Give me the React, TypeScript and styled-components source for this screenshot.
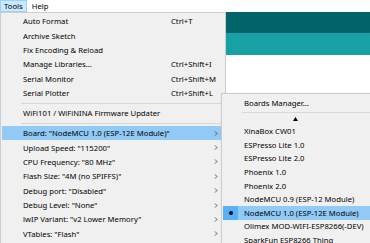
import styled, { createGlobalStyle } from "styled-components"

const GlobalStyle = createGlobalStyle`
    html, body {
        margin: 0;
        padding: 0;
        background: #ffffff;
        overflow: hidden;
    }
    body {
        font-family: "Noto Sans", "Open Sans", sans-serif;
        font-size: 7.7px;
        color: #000000;
    }
`

const Page = styled.div`
    position: relative;
    width: 370px;
    height: 243px;
    overflow: hidden;
    display: flex;
    flex-direction: column;
`

const MenuBar = styled.div`
    height: 12px;
    display: flex;
    align-items: stretch;
    background: #ffffff;
`

const BarItem = styled.div<{ $open?: boolean }>`
    display: flex;
    align-items: center;
    padding: 0 3px;
    margin-right: 1px;
    box-sizing: border-box;
    border: 1px solid ${(p) => (p.$open ? "#99d1ff" : "transparent")};
    background: ${(p) => (p.$open ? "#cce8ff" : "transparent")};
`

const Body = styled.div`
    flex: 1;
    display: flex;
`

const Menu = styled.div`
    width: 226px;
    box-sizing: border-box;
    background: #f0f0f0;
    border: 1px solid #cccccc;
    border-bottom: none;
    padding-top: 1px;
    display: flex;
    flex-direction: column;
`

const Row = styled.div<{ $active?: boolean }>`
    height: 14.4px;
    flex-shrink: 0;
    display: grid;
    grid-template-columns: 21px 148px 1fr 10px;
    align-items: center;
    margin: 0 1px;
    background: ${(p) => (p.$active ? "#91c9f7" : "transparent")};
    white-space: nowrap;
`

const Label = styled.span`
    grid-column: 2;
`

const Shortcut = styled.span`
    grid-column: 3;
`

const Arrow = styled.svg`
    grid-column: 4;
    width: 4px;
    height: 5px;
`

const Separator = styled.div<{ $h?: number }>`
    height: ${(p) => p.$h ?? 5.6}px;
    flex-shrink: 0;
    display: flex;
    align-items: center;
    padding: 0 2px 0 20px;

    &::after {
        content: "";
        flex: 1;
        height: 1px;
        background: #d7d7d7;
    }
`

const Editor = styled.div`
    flex: 1;
    display: flex;
    flex-direction: column;
`

const Toolbar = styled.div`
    height: 21px;
    background: #006468;
`

const Tabs = styled.div`
    height: 22px;
    background: #17a1a5;
`

const Sketch = styled.div`
    flex: 1;
    background: #ffffff;
`

const SubMenu = styled.div`
    position: absolute;
    left: 221px;
    top: 93px;
    width: 152px;
    height: 170px;
    box-sizing: border-box;
    background: #f0f0f0;
    border: 1px solid #cccccc;
    box-shadow: 2px 2px 3px rgba(0, 0, 0, 0.35);
    padding-top: 2px;
    display: flex;
    flex-direction: column;
`

const SubRow = styled.div<{ $active?: boolean; $h?: number }>`
    height: ${(p) => p.$h ?? 13.6}px;
    flex-shrink: 0;
    display: grid;
    grid-template-columns: 15px 6px 1fr;
    align-items: stretch;
    margin: 0 1px;
    white-space: nowrap;
    background: ${(p) => (p.$active ? "#91c9f7" : "transparent")};
`

const Check = styled.div<{ $active?: boolean }>`
    display: flex;
    align-items: center;
    justify-content: center;
    background: ${(p) => (p.$active ? "#56b0fa" : "transparent")};
`

const Dot = styled.span`
    width: 4px;
    height: 4px;
    border-radius: 50%;
    background: #000000;
`

const SubLabel = styled.span`
    grid-column: 3;
    display: flex;
    align-items: center;
`

const ScrollUp = styled.div`
    height: 10px;
    flex-shrink: 0;
    display: flex;
    align-items: center;
    justify-content: center;
    padding-right: 4px;
`

const ChevronIcon = () => (
    <Arrow viewBox="0 0 4 5">
        <polyline points="1,0.5 3,2.5 1,4.5" fill="none" stroke="#444" strokeWidth="0.9" />
    </Arrow>
)

type Item = { label: string; shortcut?: string; sub?: boolean; active?: boolean }

const topItems: Item[] = [
    { label: "Auto Format", shortcut: "Ctrl+T" },
    { label: "Archive Sketch" },
    { label: "Fix Encoding & Reload" },
    { label: "Manage Libraries...", shortcut: "Ctrl+Shift+I" },
    { label: "Serial Monitor", shortcut: "Ctrl+Shift+M" },
    { label: "Serial Plotter", shortcut: "Ctrl+Shift+L" },
]

const boardItems: Item[] = [
    { label: "Board: \"NodeMCU 1.0 (ESP-12E Module)\"", sub: true, active: true },
    { label: "Upload Speed: \"115200\"", sub: true },
    { label: "CPU Frequency: \"80 MHz\"", sub: true },
    { label: "Flash Size: \"4M (no SPIFFS)\"", sub: true },
    { label: "Debug port: \"Disabled\"", sub: true },
    { label: "Debug Level: \"None\"", sub: true },
    { label: "lwIP Variant: \"v2 Lower Memory\"", sub: true },
    { label: "VTables: \"Flash\"", sub: true },
]

const boards = [
    "XinaBox CW01",
    "ESPresso Lite 1.0",
    "ESPresso Lite 2.0",
    "Phoenix 1.0",
    "Phoenix 2.0",
    "NodeMCU 0.9 (ESP-12 Module)",
    "NodeMCU 1.0 (ESP-12E Module)",
    "Olimex MOD-WIFI-ESP8266(-DEV)",
    "SparkFun ESP8266 Thing",
]

function MenuRow({ item }: { item: Item }) {
    return (
        <Row $active={item.active}>
            <Label>{item.label}</Label>
            {item.shortcut && <Shortcut>{item.shortcut}</Shortcut>}
            {item.sub && <ChevronIcon />}
        </Row>
    )
}

export default function App() {
    return (
        <Page>
            <GlobalStyle />
            <MenuBar>
                <BarItem $open>Tools</BarItem>
                <BarItem>Help</BarItem>
            </MenuBar>
            <Body>
                <Menu>
                    {topItems.map((it) => (
                        <MenuRow key={it.label} item={it} />
                    ))}
                    <Separator />
                    <MenuRow item={{ label: "WiFi101 / WiFiNINA Firmware Updater" }} />
                    <Separator />
                    {boardItems.map((it) => (
                        <MenuRow key={it.label} item={it} />
                    ))}
                </Menu>
                <Editor>
                    <Toolbar />
                    <Tabs />
                    <Sketch />
                </Editor>
            </Body>
            <SubMenu>
                <SubRow $h={14.4}>
                    <Check />
                    <SubLabel>Boards Manager...</SubLabel>
                </SubRow>
                <Separator $h={4} />
                <ScrollUp>
                    <svg width="5" height="4" viewBox="0 0 5 4">
                        <polygon points="2.5,0 5,4 0,4" fill="#000" />
                    </svg>
                </ScrollUp>
                {boards.map((b) => {
                    const sel = b === "NodeMCU 1.0 (ESP-12E Module)"
                    return (
                        <SubRow key={b} $active={sel}>
                            <Check $active={sel}>{sel && <Dot />}</Check>
                            <SubLabel>{b}</SubLabel>
                        </SubRow>
                    )
                })}
            </SubMenu>
        </Page>
    )
}
